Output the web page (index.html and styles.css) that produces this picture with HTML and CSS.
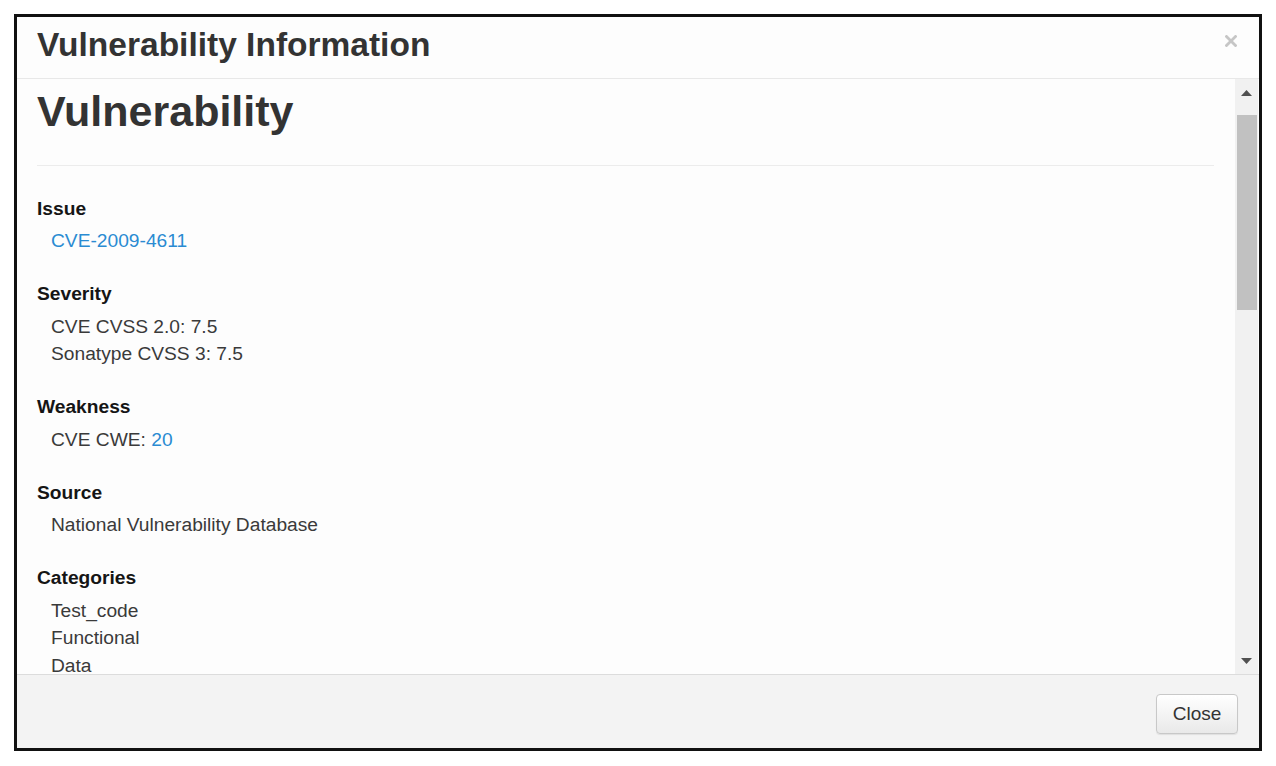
FILE: index.html
```html
<!DOCTYPE html>
<html lang="en">
<head>
<meta charset="utf-8">
<title>Vulnerability Information</title>
<link rel="stylesheet" href="styles.css">
</head>
<body>
<div class="modal">
  <div class="modal-header">
    <h4 class="modal-title">Vulnerability Information</h4>
    <svg class="close" width="12" height="12" viewBox="0 0 12 12" aria-label="Close">
      <path d="M1.5 1.5 L10.5 10.5 M10.5 1.5 L1.5 10.5" stroke="#c6c6c6" stroke-width="2.8" stroke-linecap="square"/>
    </svg>
  </div>
  <div class="modal-body">
    <div class="content">
      <h1 class="page-title">Vulnerability</h1>
      <hr class="rule">
      <div class="group">
        <div class="label">Issue</div>
        <div class="item"><a class="link" href="#">CVE-2009-4611</a></div>
      </div>
      <div class="group">
        <div class="label">Severity</div>
        <div class="item">CVE CVSS 2.0: 7.5</div>
        <div class="item">Sonatype CVSS 3: 7.5</div>
      </div>
      <div class="group">
        <div class="label">Weakness</div>
        <div class="item">CVE CWE: <a class="link" href="#">20</a></div>
      </div>
      <div class="group">
        <div class="label">Source</div>
        <div class="item">National Vulnerability Database</div>
      </div>
      <div class="group">
        <div class="label">Categories</div>
        <div class="item">Test_code</div>
        <div class="item">Functional</div>
        <div class="item">Data</div>
      </div>
    </div>
    <div class="scrollbar">
      <div class="sb-up">
        <svg width="11" height="6" viewBox="0 0 11 6"><polygon points="5.5,0 11,6 0,6" fill="#505050"/></svg>
      </div>
      <div class="sb-thumb"></div>
      <div class="sb-track"></div>
      <div class="sb-down">
        <svg width="11" height="6" viewBox="0 0 11 6"><polygon points="0,0 11,0 5.5,6" fill="#505050"/></svg>
      </div>
    </div>
  </div>
  <div class="modal-footer">
    <button class="btn" type="button">Close</button>
  </div>
</div>
</body>
</html>
```

FILE: styles.css
```css
* {
  box-sizing: border-box;
}

html, body {
  margin: 0;
  padding: 0;
  background: #ffffff;
}

body {
  font-family: "Liberation Sans", Arial, sans-serif;
  color: #333333;
}

.modal {
  margin: 14px 0 0 14px;
  width: 1248px;
  height: 737px;
  border: 3px solid #111111;
  background: #fdfdfd;
  display: flex;
  flex-direction: column;
  overflow: hidden;
}

.modal-header {
  flex: none;
  display: flex;
  justify-content: space-between;
  align-items: flex-start;
  padding: 8px 22px 13px 20px;
  border-bottom: 1px solid #e8e8e8;
  height: 62px;
}

.modal-title {
  margin: 0;
  font-size: 33.5px;
  line-height: 40px;
  font-weight: bold;
  color: #333333;
}

.close {
  margin-top: 10px;
  display: block;
}

.modal-body {
  flex: 1;
  display: flex;
  min-height: 0;
  overflow: hidden;
}

.content {
  flex: 1;
  min-width: 0;
  padding: 0 21px 0 20px;
  overflow: hidden;
}

.page-title {
  margin: 9px 0 30px;
  font-size: 43px;
  line-height: 47px;
  font-weight: bold;
  color: #333333;
}

.rule {
  margin: 0 0 28.6px;
  border: 0;
  border-top: 1px solid #ececec;
  height: 0;
}

.group {
  margin-bottom: 25.5px;
}

.group:last-child {
  margin-bottom: 0;
}

.label {
  font-size: 19.2px;
  line-height: 27.5px;
  font-weight: bold;
  color: #151515;
  margin-bottom: 5px;
}

.item {
  font-size: 19.2px;
  line-height: 27.5px;
  color: #3a3a3a;
  padding-left: 14px;
}

.link {
  color: #2a8bd2;
  text-decoration: none;
}

.scrollbar {
  flex: none;
  width: 23px;
  margin-right: 1px;
  background: #f1f1f1;
  display: flex;
  flex-direction: column;
  align-items: center;
}

.sb-up {
  height: 36px;
  padding-top: 11px;
  display: flex;
  justify-content: center;
  align-items: flex-start;
  width: 100%;
}

.sb-thumb {
  width: 20px;
  height: 195px;
  background: #c1c1c1;
}

.sb-track {
  flex: 1;
}

.sb-down {
  height: 29px;
  padding-top: 13px;
  display: flex;
  justify-content: center;
  align-items: flex-start;
  width: 100%;
}

.sb-up svg, .sb-down svg {
  display: block;
}

.modal-footer {
  flex: none;
  height: 74px;
  border-top: 1px solid #dcdcdc;
  background: #f3f3f3;
  display: flex;
  justify-content: flex-end;
  align-items: flex-start;
  padding: 19px 21px 0 0;
}

.btn {
  font-family: "Liberation Sans", Arial, sans-serif;
  font-size: 19px;
  line-height: 26px;
  color: #333333;
  height: 40px;
  width: 82px;
  padding: 6px 0;
  border: 1px solid #c8c8c8;
  border-radius: 4px;
  background: linear-gradient(to bottom, #ffffff 0%, #e9e9e9 100%);
  box-shadow: 0 1px 1px rgba(0, 0, 0, 0.08);
  text-align: center;
}
```
